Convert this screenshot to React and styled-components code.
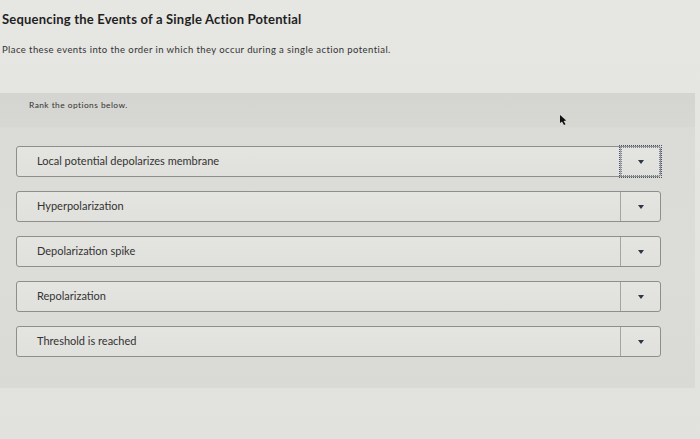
import React from "react";
import styled, { createGlobalStyle } from "styled-components";

const Global = createGlobalStyle`
  html, body { margin: 0; padding: 0; }
  body {
    background: #e3e3df;
    font-family: Lato, "Open Sans", "Liberation Sans", sans-serif;
    color: #2a2a2a;
    width: 700px;
    height: 439px;
    overflow: hidden;
  }
`;

const Page = styled.div`
  position: relative;
  display: flex;
  flex-direction: column;
  width: 700px;
  height: 439px;
  background: linear-gradient(180deg, #e6e6e2 0%, #e1e1dd 100%);
`;

const Title = styled.h1`
  margin: 11px 0 0 2px;
  font-size: 13px;
  font-weight: 700;
  line-height: 16px;
  color: #1f1f1f;
  letter-spacing: 0.2px;
`;

const Subtitle = styled.p`
  margin: 17px 0 0 2px;
  font-size: 9.5px;
  line-height: 12px;
  color: #333;
  letter-spacing: 0.42px;
`;

const Panel = styled.section`
  margin-top: 37px;
  width: 695px;
  height: 295px;
  display: flex;
  flex-direction: column;
  background: linear-gradient(180deg, #dadad6 0%, #dcdcd8 60%, #d9d9d5 100%);
`;

const PanelHeader = styled.div`
  height: 34px;
  padding-left: 29px;
  display: flex;
  align-items: flex-start;
  padding-top: 7px;
  box-sizing: border-box;
  background: linear-gradient(180deg, #d4d4d0 0%, #d7d7d3 100%);
  font-size: 8.4px;
  letter-spacing: 0.45px;
  color: #333;
`;

const List = styled.div`
  display: flex;
  flex-direction: column;
  gap: 14px;
  padding: 19px 0 0 16px;
`;

const Row = styled.div`
  width: 645px;
  height: 31px;
  box-sizing: border-box;
  display: flex;
  align-items: stretch;
  border: 1px solid #8e8e8c;
  border-radius: 3px;
  background: linear-gradient(180deg, #e4e4e0 0%, #e0e0dc 100%);
`;

const Label = styled.div`
  flex: 1;
  display: flex;
  align-items: center;
  padding-left: 20px;
  padding-bottom: 3px;
  font-size: 11px;
  color: #333;
`;

const Dropdown = styled.div`
  position: relative;
  width: 39px;
  display: flex;
  align-items: center;
  justify-content: center;
  border-left: 1px solid #a4a4a2;
  ${(p) =>
    p.$focused &&
    `
    &::after {
      content: "";
      position: absolute;
      left: -2px; top: -2px; right: -2px; bottom: -2px;
      border: 1px dotted #4a5468;
      outline: 1px dotted #7a8294;
      outline-offset: -3px;
    }
  `}
`;

const Caret = styled.span`
  width: 0;
  height: 0;
  border-left: 3px solid transparent;
  border-right: 3px solid transparent;
  border-top: 4px solid #2f3745;
`;

const Cursor = styled.svg`
  position: absolute;
  left: 559px;
  top: 115px;
`;

const items = [
  "Local potential depolarizes membrane",
  "Hyperpolarization",
  "Depolarization spike",
  "Repolarization",
  "Threshold is reached",
];

export default function App() {
  return (
    <Page>
      <Global />
      <Title>Sequencing the Events of a Single Action Potential</Title>
      <Subtitle>
        Place these events into the order in which they occur during a single action potential.
      </Subtitle>
      <Panel>
        <PanelHeader>Rank the options below.</PanelHeader>
        <List>
          {items.map((t, i) => (
            <Row key={t}>
              <Label>{t}</Label>
              <Dropdown $focused={i === 0}>
                <Caret />
              </Dropdown>
            </Row>
          ))}
        </List>
      </Panel>
      <Cursor width="8" height="11" viewBox="0 0 8 11">
        <path d="M1 0 L1 8 L3 6.5 L5 10 L6.5 9.2 L4.6 5.9 L7.2 5.6 Z" fill="#111" />
      </Cursor>
    </Page>
  );
}
